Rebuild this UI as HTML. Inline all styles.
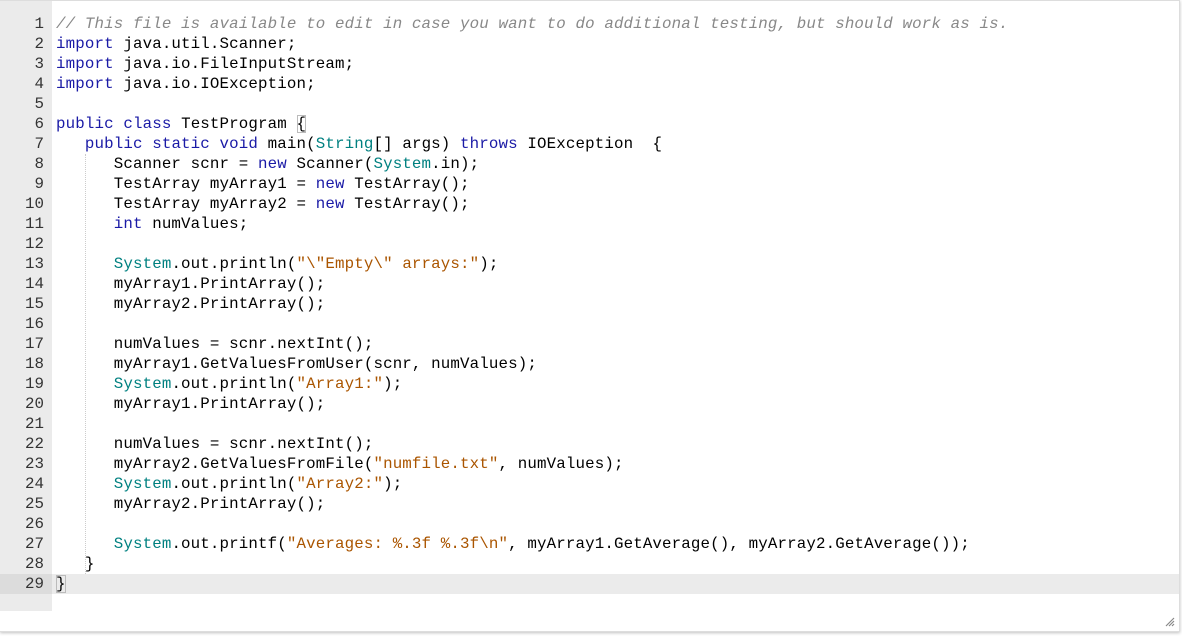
<!DOCTYPE html>
<html><head><style>
body{margin:0;background:#fff;width:1182px;height:636px;overflow:hidden}
.ed{position:absolute;left:0;top:0;width:1179px;height:630px;border:1px solid #ddd;border-left:none;box-shadow:0 1px 3px rgba(0,0,0,.25);background:#fff;overflow:hidden}
.gut{position:absolute;left:0;top:0;width:52px;height:610px;background:#ebebeb}
.hl{position:absolute;left:52px;top:573px;width:1127px;height:20px;background:#ebebeb}
.hlg{position:absolute;left:0;top:573px;width:52px;height:20px;background:#dcdcdc}
.code{position:absolute;left:0;top:13px;font-family:"Liberation Mono",monospace;font-size:15.8px;letter-spacing:0.14px;line-height:20px;white-space:pre;color:#000}
.ln{display:inline-block;width:44px;text-align:right;margin-right:12px;color:#333;letter-spacing:0}
.k{color:#1a1aa6}.s{color:#aa5500}.c{color:#888;font-style:italic}.t{color:#008080}
.b{outline:1px solid #bbb;outline-offset:-1px}
.guide{position:absolute;left:85px;top:153px;height:420px;border-left:1px dotted #ccc}
</style></head><body><div class="ed">
<div class="gut"></div><div class="hlg"></div><div class="hl"></div>
<div class="guide"></div>
<div class="code"><span class="ln">1</span><span class="c">// This file is available to edit in case you want to do additional testing, but should work as is.</span>
<span class="ln">2</span><span class="k">import</span> java.util.Scanner;
<span class="ln">3</span><span class="k">import</span> java.io.FileInputStream;
<span class="ln">4</span><span class="k">import</span> java.io.IOException;
<span class="ln">5</span>
<span class="ln">6</span><span class="k">public</span> <span class="k">class</span> TestProgram <span class="b">{</span>
<span class="ln">7</span>   <span class="k">public</span> <span class="k">static</span> <span class="k">void</span> main(<span class="t">String</span>[] args) <span class="k">throws</span> IOException  {
<span class="ln">8</span>      Scanner scnr = <span class="k">new</span> Scanner(<span class="t">System</span>.in);
<span class="ln">9</span>      TestArray myArray1 = <span class="k">new</span> TestArray();
<span class="ln">10</span>      TestArray myArray2 = <span class="k">new</span> TestArray();
<span class="ln">11</span>      <span class="k">int</span> numValues;
<span class="ln">12</span>
<span class="ln">13</span>      <span class="t">System</span>.out.println(<span class="s">"\"Empty\" arrays:"</span>);
<span class="ln">14</span>      myArray1.PrintArray();
<span class="ln">15</span>      myArray2.PrintArray();
<span class="ln">16</span>
<span class="ln">17</span>      numValues = scnr.nextInt();
<span class="ln">18</span>      myArray1.GetValuesFromUser(scnr, numValues);
<span class="ln">19</span>      <span class="t">System</span>.out.println(<span class="s">"Array1:"</span>);
<span class="ln">20</span>      myArray1.PrintArray();
<span class="ln">21</span>
<span class="ln">22</span>      numValues = scnr.nextInt();
<span class="ln">23</span>      myArray2.GetValuesFromFile(<span class="s">"numfile.txt"</span>, numValues);
<span class="ln">24</span>      <span class="t">System</span>.out.println(<span class="s">"Array2:"</span>);
<span class="ln">25</span>      myArray2.PrintArray();
<span class="ln">26</span>
<span class="ln">27</span>      <span class="t">System</span>.out.printf(<span class="s">"Averages: %.3f %.3f\n"</span>, myArray1.GetAverage(), myArray2.GetAverage());
<span class="ln">28</span>   }
<span class="ln">29</span><span class="b">}</span></div>
<svg style="position:absolute;right:4px;bottom:4px" width="10" height="10"><path d="M9 1L1 9M9 4L4 9M9 7L7 9" stroke="#888" stroke-width="1.2"/></svg>
</div></body></html>
